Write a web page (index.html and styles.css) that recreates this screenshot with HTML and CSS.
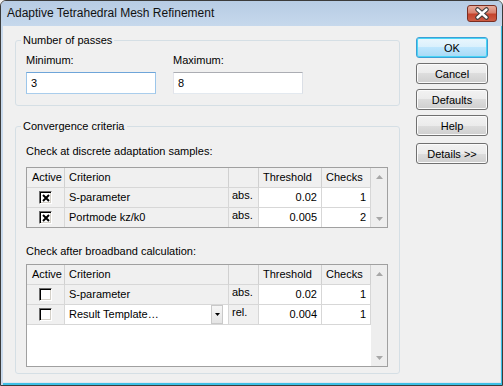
FILE: index.html
```html
<!DOCTYPE html>
<html lang="en">
<head>
    <meta charset="UTF-8">
    <meta name="viewport" content="width=device-width, initial-scale=1.0">
    <title>Adaptive Tetrahedral Mesh Refinement</title>
    <link rel="stylesheet" href="styles.css">
</head>
<body>
    <div class="window">
        <div class="titlebar">
            <span class="title">Adaptive Tetrahedral Mesh Refinement</span>
            <button class="close" title="Close">
                <svg width="30" height="17" viewBox="0 0 30 17">
                    <path d="M10.5 4.5 L19.5 12.5 M19.5 4.5 L10.5 12.5" stroke="#3c3c3c" stroke-width="4.6" stroke-linecap="round"/>
                    <path d="M10.5 4.5 L19.5 12.5 M19.5 4.5 L10.5 12.5" stroke="#fff" stroke-width="2.4" stroke-linecap="round"/>
                </svg>
            </button>
        </div>

        <div class="content">
            <div class="main">
                <fieldset class="group passes">
                    <legend>Number of passes</legend>
                    <div class="fields">
                        <label class="field">
                            <span>Minimum:</span>
                            <input class="focused" type="text" value="3">
                        </label>
                        <label class="field">
                            <span>Maximum:</span>
                            <input type="text" value="8">
                        </label>
                    </div>
                </fieldset>

                <fieldset class="group criteria">
                    <legend>Convergence criteria</legend>

                    <p class="caption">Check at discrete adaptation samples:</p>
                    <div class="list first">
                        <div class="cells">
                            <div class="cell head active-h">Active</div>
                            <div class="cell head">Criterion</div>
                            <div class="cell head"></div>
                            <div class="cell head">Threshold</div>
                            <div class="cell head">Checks</div>

                            <div class="cell ro box"><span class="check on"><svg width="8" height="8" viewBox="0 0 8 8"><path d="M1 1 L7 7 M7 1 L1 7" stroke="#000" stroke-width="2"/></svg></span></div>
                            <div class="cell ro">S-parameter</div>
                            <div class="cell ro unit">abs.</div>
                            <div class="cell num">0.02</div>
                            <div class="cell num">1</div>

                            <div class="cell ro box"><span class="check on"><svg width="8" height="8" viewBox="0 0 8 8"><path d="M1 1 L7 7 M7 1 L1 7" stroke="#000" stroke-width="2"/></svg></span></div>
                            <div class="cell ro">Portmode kz/k0</div>
                            <div class="cell ro unit">abs.</div>
                            <div class="cell num">0.005</div>
                            <div class="cell num">2</div>
                        </div>
                        <div class="vscroll">
                            <span class="arrow"><svg width="7" height="4" viewBox="0 0 7 4"><path d="M0 4 L3.5 0 L7 4 Z" fill="#a7a7a7"/></svg></span>
                            <span class="arrow"><svg width="7" height="4" viewBox="0 0 7 4"><path d="M0 0 L3.5 4 L7 0 Z" fill="#a7a7a7"/></svg></span>
                        </div>
                    </div>

                    <p class="caption second">Check after broadband calculation:</p>
                    <div class="list tall">
                        <div class="cells">
                            <div class="cell head active-h">Active</div>
                            <div class="cell head">Criterion</div>
                            <div class="cell head"></div>
                            <div class="cell head">Threshold</div>
                            <div class="cell head">Checks</div>

                            <div class="cell ro box"><span class="check"></span></div>
                            <div class="cell ro">S-parameter</div>
                            <div class="cell ro unit">abs.</div>
                            <div class="cell num">0.02</div>
                            <div class="cell num">1</div>

                            <div class="cell ro box"><span class="check"></span></div>
                            <div class="cell combo">
                                <span>Result Template…</span>
                                <span class="drop"><svg width="5" height="3" viewBox="0 0 5 3"><path d="M0 0 L5 0 L2.5 3 Z" fill="#000"/></svg></span>
                            </div>
                            <div class="cell ro unit">rel.</div>
                            <div class="cell num">0.004</div>
                            <div class="cell num">1</div>
                        </div>
                        <div class="vscroll">
                            <span class="arrow"><svg width="7" height="4" viewBox="0 0 7 4"><path d="M0 4 L3.5 0 L7 4 Z" fill="#a7a7a7"/></svg></span>
                            <span class="arrow"><svg width="7" height="4" viewBox="0 0 7 4"><path d="M0 0 L3.5 4 L7 0 Z" fill="#a7a7a7"/></svg></span>
                        </div>
                    </div>
                </fieldset>
            </div>

            <div class="buttons">
                <button class="btn default">OK</button>
                <button class="btn">Cancel</button>
                <button class="btn">Defaults</button>
                <button class="btn">Help</button>
                <button class="btn details">Details &gt;&gt;</button>
            </div>
        </div>
    </div>
</body>
</html>
```

FILE: styles.css
```css
body {
    margin: 0;
    padding: 0;
    background-color: #f0f0f0;
}

.window {
    width: 503px;
    height: 386px;
    box-sizing: border-box;
    border: 1px solid #3b3b3b;
    border-radius: 6px 6px 0 0;
    overflow: hidden;
    background-color: #f0f0f0;
    box-shadow: inset 2px 0 0 #c8d9ec, inset -1px -2px 0 #3cc0e6, inset -2px -3px 0 #dfe7ef;
    font-family: "Liberation Sans", Arial, sans-serif;
    font-size: 11px;
    color: #000;
}

.titlebar {
    height: 25px;
    display: flex;
    justify-content: space-between;
    align-items: flex-start;
    padding: 0 5px 0 6px;
    background: linear-gradient(#b7cce4, #c6d8ec);
}
.title {
    font-size: 12px;
    line-height: 25px;
    color: #111;
}
.close {
    margin-top: 4px;
    width: 30px;
    height: 17px;
    padding: 0;
    border: 1px solid #7a2e22;
    border-radius: 3px;
    background: linear-gradient(#e7ab9c 0%, #d8826f 45%, #c4432c 55%, #cd5d45 100%);
    display: flex;
    align-items: center;
    justify-content: center;
}
.close svg {
    display: block;
    margin: -1px;
}

.content {
    display: flex;
    padding: 7px 0 0 14px;
}
.main {
    width: 385px;
}

/* group boxes */
.group {
    margin: 0;
    min-width: 0;
    border: 1px solid #d5dfe5;
    border-radius: 3px;
    padding: 6px 11px 11px 10px;
}
.group legend {
    padding: 0 2px;
    margin-left: -5px;
    line-height: 14px;
}
.criteria {
    margin-top: 13px;
    padding-top: 11px;
    padding-bottom: 6px;
}

.fields {
    display: flex;
    gap: 17px;
}
.field {
    display: flex;
    flex-direction: column;
}
.field span {
    line-height: 14px;
    margin-bottom: 5px;
}
.field input {
    width: 130px;
    height: 22px;
    box-sizing: border-box;
    margin: 0;
    padding: 0 4px;
    font-family: inherit;
    font-size: 11px;
    color: #000;
    background: #fff;
    border: 1px solid;
    border-color: #abadb3 #dbdfe6 #e3e9ef #e2e3ea;
    outline: none;
}
.field input.focused {
    border-color: #6ea5d9 #9cc6ea #a9cdec #9cc6ea;
}

.caption {
    margin: 0;
    line-height: 14px;
}
.caption.second {
    margin-top: 16px;
}

/* grids */
.list {
    display: flex;
    width: 362px;
    height: 61px;
    box-sizing: border-box;
    margin-top: 9px;
    border: 1px solid #a0a0a0;
    background: #fff;
}
.list.tall {
    height: 103px;
    margin-top: 6px;
}
.cells {
    width: 344px;
    display: grid;
    grid-template-columns: 38px 164px 30px 63px 49px;
    grid-auto-rows: 20px;
    align-content: start;
    overflow: hidden;
    background: #fff;
}
.cell {
    box-sizing: border-box;
    border-right: 1px solid #d7d7d7;
    border-bottom: 1px solid #d7d7d7;
    padding: 0 4px;
    line-height: 19px;
    white-space: nowrap;
    overflow: hidden;
}
.head {
    background: #f0f0f0;
    border-right-color: #d0d0d0;
}
.active-h {
    padding-left: 5px;
}
.ro {
    background: #f0f0f0;
}
.unit {
    padding-left: 3px;
    line-height: 14px;
}
.num {
    text-align: right;
}
.box {
    display: flex;
    align-items: center;
    justify-content: center;
}

.check {
    width: 13px;
    height: 13px;
    box-sizing: border-box;
    border: 1px solid;
    border-color: #6b6b6b #fff #fff #6b6b6b;
    box-shadow: inset 1px 1px 0 #000, inset -1px -1px 0 #d4d0c8;
    background: #fff;
    display: flex;
    align-items: center;
    justify-content: center;
}
.check svg {
    display: block;
    margin: 1px 0 0 1px;
}

.combo {
    display: flex;
    justify-content: space-between;
    padding-right: 5px;
}
.drop {
    width: 12px;
    height: 19px;
    box-sizing: border-box;
    border: 1px solid #c9c9c9;
    background: linear-gradient(#f6f6f6, #e4e4e4);
    display: flex;
    align-items: center;
    justify-content: center;
}

.vscroll {
    width: 16px;
    background: #eeeeee;
    display: flex;
    flex-direction: column;
    justify-content: space-between;
}
.arrow {
    height: 17px;
    display: flex;
    align-items: center;
    justify-content: center;
}

/* dialog buttons */
.buttons {
    margin-left: 16px;
    padding-top: 4px;
    display: flex;
    flex-direction: column;
    gap: 5px;
}
.btn {
    width: 72px;
    height: 21px;
    padding: 0;
    font-family: inherit;
    font-size: 11px;
    color: #000;
    border: 1px solid #707070;
    border-radius: 3px;
    background: linear-gradient(#f2f2f2 0%, #ebebeb 50%, #dddddd 50%, #cfcfcf 100%);
    box-shadow: inset 0 0 0 1px #fbfbfb;
    cursor: pointer;
}
.btn.default {
    border-color: #3c9fd6;
    background: linear-gradient(#eaf6fd 0%, #d9f0fc 50%, #bee6fd 50%, #a7d9f5 100%);
    box-shadow: inset 0 0 0 1px #48d5f5;
}
.btn.details {
    margin-top: 2px;
}
```
